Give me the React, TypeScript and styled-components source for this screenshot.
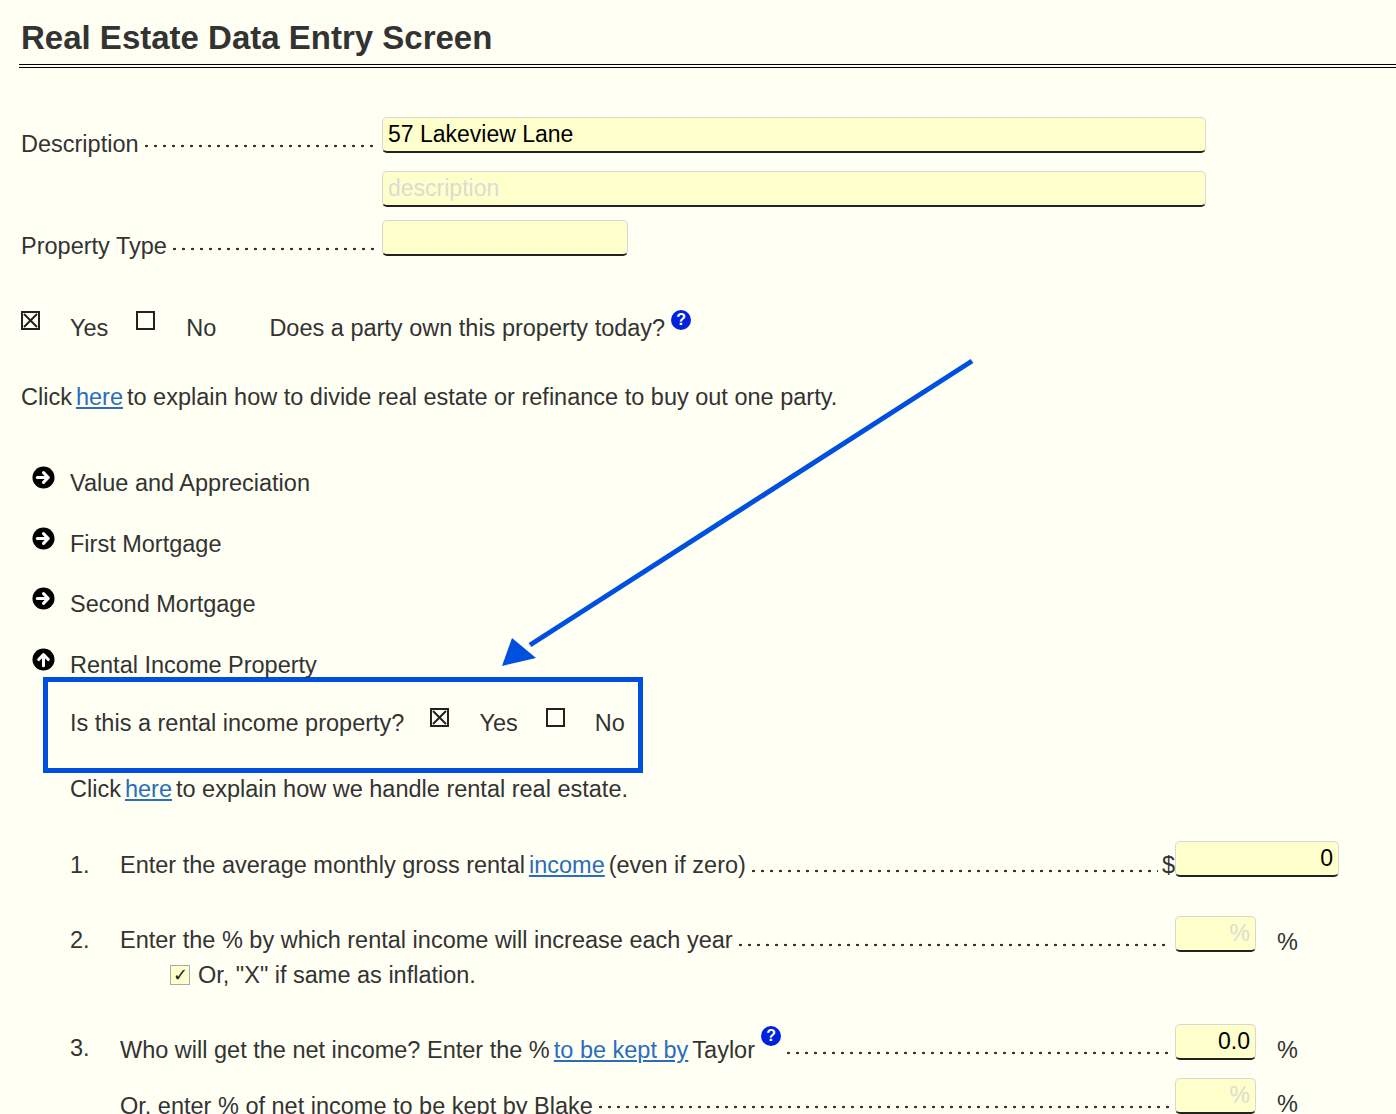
import React from "react";
import styled, { createGlobalStyle } from "styled-components";

const Global = createGlobalStyle`
  html, body { margin: 0; padding: 0; background: #fffff3; }
  body { font-family: "Liberation Sans", Arial, sans-serif; color: #333; font-size: 23.5px; }
`;

const Page = styled.div`
  position: relative;
  width: 1396px;
  height: 1114px;
  overflow: hidden;
`;

const Title = styled.h1`
  margin: 0 0 0 19px;
  padding: 18px 0 6px 2px;
  font-size: 33px;
  line-height: 40px;
  font-weight: bold;
  color: #333;
  border-bottom: 4px double #000;
`;

const Row = styled.div<{ $top: number; $h: number; $left?: number }>`
  display: flex;
  align-items: center;
  margin-top: ${(p) => p.$top}px;
  height: ${(p) => p.$h}px;
  padding-left: ${(p) => p.$left ?? 21}px;
  white-space: nowrap;
`;

const Label = styled.div<{ $w: number }>`
  display: flex;
  align-items: center;
  width: ${(p) => p.$w}px;
  flex: none;
  height: 100%;
`;

const Leader = styled.span`
  flex: 1;
  align-self: stretch;
  margin: 0 4px 0 3px;
  background: radial-gradient(circle, #333 1.1px, transparent 1.6px) 0 calc(100% - 4px) / 9px 6px repeat-x;
`;

const Input = styled.div<{ $w: number; $ph?: boolean; $right?: boolean }>`
  box-sizing: border-box;
  width: ${(p) => p.$w}px;
  height: 36px;
  flex: none;
  background: #ffffcc;
  border: 1px solid #d8d8d0;
  border-bottom: 2px solid #222;
  border-radius: 5px;
  padding: 0 5px;
  display: flex;
  align-items: center;
  justify-content: ${(p) => (p.$right ? "flex-end" : "flex-start")};
  font-size: 23px;
  color: ${(p) => (p.$ph ? "#dcdcd0" : "#000")};
`;

const Box = styled.span<{ $ml?: number }>`
  display: inline-flex;
  box-sizing: border-box;
  width: 19px;
  height: 19px;
  border: 2px solid #222;
  margin-left: ${(p) => p.$ml ?? 0}px;
  position: relative;
  top: -6px;
  flex: none;
`;

const Text = styled.span<{ $ml?: number; $dy?: number }>`
  margin-left: ${(p) => p.$ml ?? 0}px;
  position: relative;
  top: ${(p) => p.$dy ?? 0}px;
`;

const Link = styled.a`
  color: #2a6ebb;
  text-decoration: underline;
  margin: 0 4px;
`;

const Help = styled.span`
  display: inline-flex;
  align-items: center;
  justify-content: center;
  width: 20px;
  height: 20px;
  border-radius: 50%;
  background: #0022dd;
  color: #fff;
  font-weight: bold;
  font-size: 16px;
  margin-left: 6px;
  position: relative;
  top: -6px;
  flex: none;
`;

const Expander = styled(Row)`
  padding-left: 32px;
`;

const Icon = styled.svg`
  width: 23px;
  height: 23px;
  flex: none;
  margin-right: 15px;
  position: relative;
  top: -6px;
`;

const Callout = styled.div`
  box-sizing: border-box;
  margin: -8px 0 0 43px;
  width: 600px;
  height: 96px;
  border: 5px solid #0050e0;
  display: flex;
  align-items: center;
  padding: 0 0 4px 22px;
  white-space: nowrap;
`;

const Num = styled.span`
  width: 50px;
  flex: none;
  position: relative;
  top: 6px;
`;

const Unit = styled.span`
  width: 60px;
  padding-left: 21px;
  box-sizing: border-box;
  flex: none;
  position: relative;
  top: 8px;
`;

const Check = styled.span`
  display: inline-flex;
  align-items: center;
  justify-content: center;
  box-sizing: border-box;
  width: 20px;
  height: 20px;
  background: #ffffcc;
  border: 1px solid #aaa;
  font-size: 18px;
  color: #222;
  margin-right: 8px;
`;

const ArrowSvg = styled.svg`
  position: absolute;
  left: 0;
  top: 0;
  pointer-events: none;
`;

const XBox = ({ ml }: { ml?: number }) => (
  <Box $ml={ml}>
    <svg width="15" height="15" viewBox="0 0 15 15">
      <path d="M1 1L14 14M14 1L1 14" stroke="#222" strokeWidth="2" />
    </svg>
  </Box>
);

const Circ = ({ up }: { up?: boolean }) => (
  <Icon viewBox="0 0 24 24">
    <circle cx="12" cy="12" r="11.5" fill="#000" />
    <g transform={up ? "rotate(-90 12 12)" : undefined}>
      <path d="M5.5 12H16M12 7l5 5-5 5" stroke="#fff" strokeWidth="3.2" fill="none" strokeLinecap="round" strokeLinejoin="round" />
    </g>
  </Icon>
);

export default function App() {
  return (
    <Page>
      <Global />
      <Title>Real Estate Data Entry Screen</Title>
      <Row $top={49} $h={36}>
        <Label $w={361}>
          <Text $dy={9}>Description</Text>
          <Leader />
        </Label>
        <Input $w={824}>57 Lakeview Lane</Input>
      </Row>
      <Row $top={18} $h={36}>
        <Label $w={361} />
        <Input $w={824} $ph>description</Input>
      </Row>
      <Row $top={13} $h={36}>
        <Label $w={361}>
          <Text $dy={8}>Property Type</Text>
          <Leader />
        </Label>
        <Input $w={246} />
      </Row>
      <Row $top={55} $h={30}>
        <XBox />
        <Text $ml={30} $dy={2}>Yes</Text>
        <Box $ml={28} />
        <Text $ml={31} $dy={2}>No</Text>
        <Text $ml={53} $dy={2}>Does a party own this property today?</Text>
        <Help>?</Help>
      </Row>
      <Row $top={41} $h={30}>
        Click<Link>here</Link>to explain how to divide real estate or refinance to buy out one party.
      </Row>
      <Expander $top={51} $h={40}>
        <Circ />Value and Appreciation
      </Expander>
      <Expander $top={21} $h={40}>
        <Circ />First Mortgage
      </Expander>
      <Expander $top={20} $h={40}>
        <Circ />Second Mortgage
      </Expander>
      <Expander $top={21} $h={40}>
        <Circ up />Rental Income Property
      </Expander>
      <Callout>
        Is this a rental income property?
        <XBox ml={26} />
        <Text $ml={30}>Yes</Text>
        <Box $ml={28} />
        <Text $ml={30}>No</Text>
      </Callout>
      <Row $top={1} $h={30} $left={70}>
        Click<Link>here</Link>to explain how we handle rental real estate.
      </Row>
      <Row $top={36} $h={38} $left={70}>
        <Num>1.</Num>
        <Label $w={1055}>
          <Text $dy={6}>
            Enter the average monthly gross rental<Link>income</Link>(even if zero)
          </Text>
          <Leader />
          <Text $dy={6}>$</Text>
        </Label>
        <Input $w={164} $right>0</Input>
      </Row>
      <Row $top={38} $h={36} $left={70}>
        <Num>2.</Num>
        <Label $w={1055}>
          <Text $dy={6}>Enter the % by which rental income will increase each year</Text>
          <Leader />
        </Label>
        <Input $w={81} $ph $right>%</Input>
        <Unit>%</Unit>
      </Row>
      <Row $top={10} $h={26} $left={170}>
        <Check>✓</Check>Or, "X" if same as inflation.
      </Row>
      <Row $top={36} $h={36} $left={70}>
        <Num>3.</Num>
        <Label $w={1055}>
          <Text $dy={8}>
            Who will get the net income? Enter the %<Link>to be kept by</Link>Taylor
          </Text>
          <Help>?</Help>
          <Leader />
        </Label>
        <Input $w={81} $right>0.0</Input>
        <Unit>%</Unit>
      </Row>
      <Row $top={18} $h={36} $left={120}>
        <Label $w={1055}>
          <Text $dy={10}>Or, enter % of net income to be kept by Blake</Text>
          <Leader />
        </Label>
        <Input $w={81} $ph $right>%</Input>
        <Unit>%</Unit>
      </Row>
      <ArrowSvg width="1396" height="1114">
        <line x1="972" y1="361" x2="530" y2="645" stroke="#0050e0" strokeWidth="5" />
        <polygon points="502,666 512,638 536,658" fill="#0050e0" />
      </ArrowSvg>
    </Page>
  );
}
